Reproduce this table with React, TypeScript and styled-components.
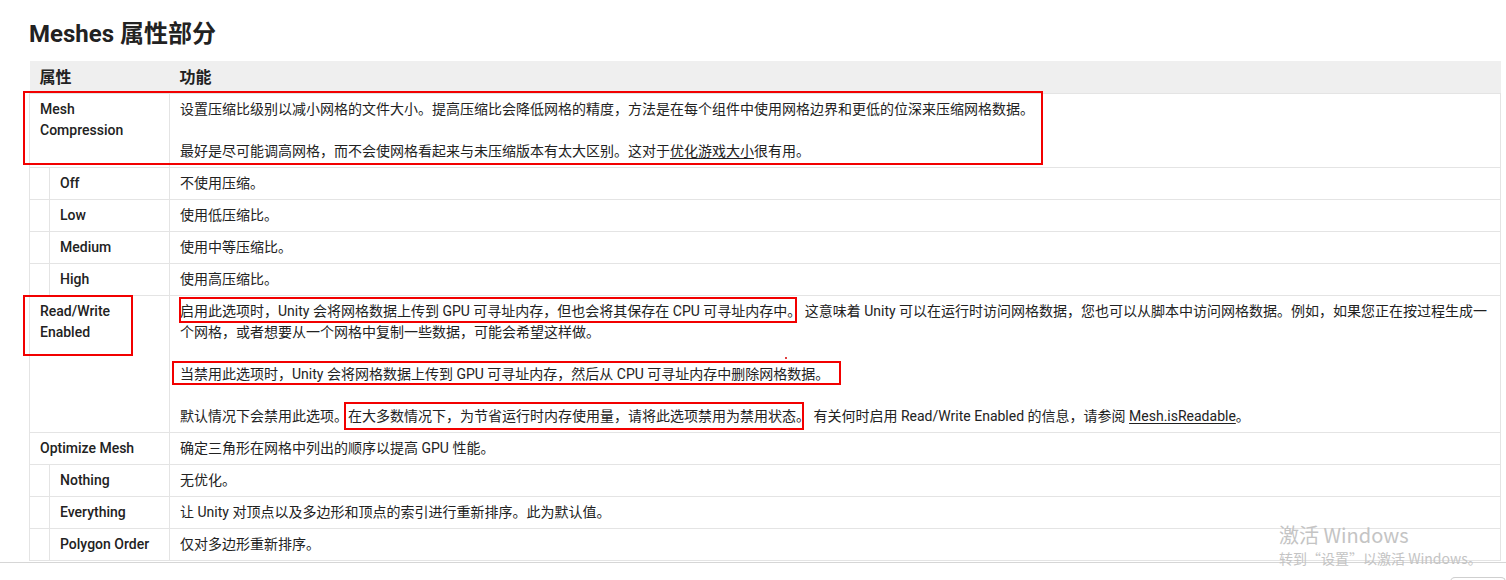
import React from "react";
import styled, { createGlobalStyle } from "styled-components";

const GlobalStyle = createGlobalStyle`
  html, body {
    margin: 0;
    padding: 0;
    background: #ffffff;
    overflow: hidden;
  }
  body {
    font-family: Roboto, "Noto Sans CJK SC", sans-serif;
    color: #222222;
  }
`;

const Page = styled.div`
  position: relative;
  width: 1506px;
  height: 580px;
  overflow: hidden;
`;

const Content = styled.div`
  padding: 18px 0 0 29px;
`;

const Title = styled.h2`
  margin: 0 0 11px 0;
  font-size: 24px;
  line-height: 32px;
  font-weight: 700;
  color: #222222;
`;

const Table = styled.table`
  width: 1472px;
  border-collapse: collapse;
  table-layout: fixed;
  font-size: 14px;
  line-height: 21px;
`;

const HeadCell = styled.th`
  background: #efefef;
  height: 32px;
  padding: 0 10px;
  text-align: left;
  font-size: 16px;
  font-weight: 700;
  color: #222222;
  border: none;
`;

const Cell = styled.td<{ $label?: boolean }>`
  border: 1px solid #e4e4e4;
  padding: 5px 10px;
  vertical-align: top;
  font-weight: ${(p) => (p.$label ? 500 : 400)};
  color: #222222;
`;

const Para = styled.p`
  margin: 0;
  & + & {
    margin-top: 21px;
  }
`;

const Link = styled.a`
  color: #222222;
  text-decoration: underline;
  text-underline-offset: 2px;
`;

const Footer = styled.div`
  margin-top: 1px;
  height: 20px;
  border-top: 1px solid #d6d6d6;
  display: flex;
  justify-content: flex-end;
  align-items: flex-end;
  padding-right: 0;
`;

const FooterButton = styled.div`
  width: 54px;
  height: 6px;
  border: 1px solid #cfcfcf;
  border-bottom: none;
  border-radius: 5px 5px 0 0;
  margin-bottom: -1px;
`;

const RedBox = styled.div`
  position: absolute;
  border: 2px solid #f20000;
  box-sizing: border-box;
  pointer-events: none;
`;

const RedDot = styled.div`
  position: absolute;
  left: 785px;
  top: 357px;
  width: 2px;
  height: 2px;
  background: #e04040;
`;

const Watermark = styled.div`
  position: absolute;
  left: 1279px;
  top: 522px;
  color: #c4c4c4;
  font-family: "Noto Sans CJK SC", sans-serif;
  display: flex;
  flex-direction: column;
  pointer-events: none;
`;

const WatermarkTitle = styled.span`
  font-size: 20px;
  line-height: 26px;
`;

const WatermarkSub = styled.span`
  font-size: 14px;
  line-height: 20px;
`;

type Row = {
  label: string;
  sub?: boolean;
  desc: React.ReactNode[];
};

const rows: Row[] = [
  {
    label: "Mesh Compression",
    desc: [
      "设置压缩比级别以减小网格的文件大小。提高压缩比会降低网格的精度，方法是在每个组件中使用网格边界和更低的位深来压缩网格数据。",
      <>
        最好是尽可能调高网格，而不会使网格看起来与未压缩版本有太大区别。这对于
        <Link href="#">优化游戏大小</Link>很有用。
      </>,
    ],
  },
  { label: "Off", sub: true, desc: ["不使用压缩。"] },
  { label: "Low", sub: true, desc: ["使用低压缩比。"] },
  { label: "Medium", sub: true, desc: ["使用中等压缩比。"] },
  { label: "High", sub: true, desc: ["使用高压缩比。"] },
  {
    label: "Read/Write Enabled",
    desc: [
      "启用此选项时，Unity 会将网格数据上传到 GPU 可寻址内存，但也会将其保存在 CPU 可寻址内存中。 这意味着 Unity 可以在运行时访问网格数据，您也可以从脚本中访问网格数据。例如，如果您正在按过程生成一个网格，或者想要从一个网格中复制一些数据，可能会希望这样做。",
      "当禁用此选项时，Unity 会将网格数据上传到 GPU 可寻址内存，然后从 CPU 可寻址内存中删除网格数据。",
      <>
        默认情况下会禁用此选项。在大多数情况下，为节省运行时内存使用量，请将此选项禁用为禁用状态。 有关何时启用 Read/Write Enabled 的信息，请参阅{" "}
        <Link href="#">Mesh.isReadable</Link>。
      </>,
    ],
  },
  { label: "Optimize Mesh", desc: ["确定三角形在网格中列出的顺序以提高 GPU 性能。"] },
  { label: "Nothing", sub: true, desc: ["无优化。"] },
  { label: "Everything", sub: true, desc: ["让 Unity 对顶点以及多边形和顶点的索引进行重新排序。此为默认值。"] },
  { label: "Polygon Order", sub: true, desc: ["仅对多边形重新排序。"] },
];

const boxes = [
  { left: 23, top: 91, width: 1020, height: 74 },
  { left: 23, top: 295, width: 110, height: 61 },
  { left: 179, top: 297, width: 618, height: 26 },
  { left: 172, top: 361, width: 669, height: 24 },
  { left: 344, top: 402, width: 460, height: 28 },
];

export default function App() {
  return (
    <Page>
      <GlobalStyle />
      <Content>
        <Title>Meshes 属性部分</Title>
        <Table>
          <colgroup>
            <col style={{ width: 20 }} />
            <col style={{ width: 120 }} />
            <col />
          </colgroup>
          <thead>
            <tr>
              <HeadCell colSpan={2}>属性</HeadCell>
              <HeadCell>功能</HeadCell>
            </tr>
          </thead>
          <tbody>
            {rows.map((r) => (
              <tr key={r.label}>
                {r.sub ? (
                  <>
                    <Cell />
                    <Cell $label>{r.label}</Cell>
                  </>
                ) : (
                  <Cell $label colSpan={2}>
                    {r.label}
                  </Cell>
                )}
                <Cell>
                  {r.desc.map((d, i) => (
                    <Para key={i}>{d}</Para>
                  ))}
                </Cell>
              </tr>
            ))}
          </tbody>
        </Table>
      </Content>
      <Footer>
        <FooterButton />
      </Footer>
      {boxes.map((b, i) => (
        <RedBox key={i} style={b} />
      ))}
      <RedDot />
      <Watermark>
        <WatermarkTitle>激活 Windows</WatermarkTitle>
        <WatermarkSub>转到“设置”以激活 Windows。</WatermarkSub>
      </Watermark>
    </Page>
  );
}
